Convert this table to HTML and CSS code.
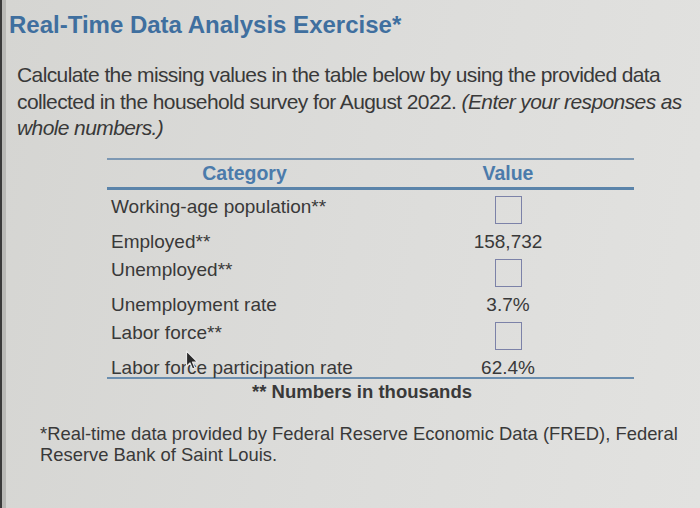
FILE: index.html
```html
<!DOCTYPE html>
<html lang="en">
<head>
<meta charset="utf-8">
<title>Real-Time Data Analysis Exercise</title>
<link rel="stylesheet" href="styles.css">
</head>
<body>
<div class="screen">
  <h1 class="title">Real-Time Data Analysis Exercise*</h1>
  <p class="prompt">Calculate the missing values in the table below by using the provided data collected in the household survey for August 2022. <em>(Enter your responses as whole numbers.)</em></p>
  <div class="table">
    <div class="head">
      <div class="cat">Category</div>
      <div class="val">Value</div>
    </div>
    <div class="row tall">
      <div class="cat">Working-age population**</div>
      <div class="val"><span class="box"></span></div>
    </div>
    <div class="row">
      <div class="cat">Employed**</div>
      <div class="val">158,732</div>
    </div>
    <div class="row tall">
      <div class="cat">Unemployed**</div>
      <div class="val"><span class="box"></span></div>
    </div>
    <div class="row">
      <div class="cat">Unemployment rate</div>
      <div class="val">3.7%</div>
    </div>
    <div class="row tall">
      <div class="cat">Labor force**</div>
      <div class="val"><span class="box"></span></div>
    </div>
    <div class="row last">
      <div class="cat">Labor force participation rate</div>
      <div class="val">62.4%</div>
    </div>
    <svg class="cursor" width="15" height="21" viewBox="0 0 15 21"><path d="M1.5 1 L1.5 16.5 L5 13 L7.5 19 L10 18 L7.5 12 L12.5 12 Z" fill="#2a2a2a" stroke="#e8e8e8" stroke-width="1.2" stroke-linejoin="round"/></svg>
  </div>
  <p class="note">** Numbers in thousands</p>
  <p class="source">*Real-time data provided by Federal Reserve Economic Data (FRED), Federal Reserve Bank of Saint Louis.</p>
</div>
</body>
</html>
```
FILE: styles.css
```css
html, body {
  margin: 0;
  padding: 0;
  width: 700px;
  height: 508px;
  overflow: hidden;
}
body {
  background: #3a3a3a;
  font-family: "Liberation Sans", Arial, sans-serif;
  color: #393939;
}
.screen {
  box-sizing: border-box;
  height: 508px;
  margin-left: 2px;
  border-left: 4px solid #b9b9b6;
  background: linear-gradient(100deg, #d5d5d2 0%, #dcdcda 50%, #e2e2e0 100%);
  padding: 11px 0 0 3px;
}
.title {
  margin: 0;
  font-size: 24px;
  font-weight: bold;
  color: #3f6f9f;
  line-height: 28px;
}
.prompt {
  margin: 23px 0 0 8px;
  font-size: 21px;
  letter-spacing: -0.6px;
  line-height: 26.5px;
  width: 674px;
}
.table {
  position: relative;
  margin: 16px 0 0 98px;
  width: 527px;
  border-top: 2px solid #7d98b3;
}
.head, .row {
  display: grid;
  grid-template-columns: 275px 1fr;
  align-items: center;
}
.head {
  height: 27px;
  border-bottom: 3px solid #5b84aa;
  font-weight: bold;
  color: #4b7bab;
  font-size: 19.5px;
}
.head .cat, .head .val { text-align: center; }
.row {
  height: 30px;
  padding-top: 8px;
  box-sizing: border-box;
  font-size: 19px;
}
.row.tall {
  height: 33px;
  padding-top: 0;
}
.row .cat { padding-left: 4px; }
.row .val { text-align: center; }
.row.last { border-bottom: 2px solid #6b8eaf; }
.box {
  display: inline-block;
  box-sizing: border-box;
  width: 27px;
  height: 28px;
  margin-top: 6px;
  border: 1.5px solid #7c82a8;
  vertical-align: middle;
}
.cursor {
  position: absolute;
  left: 78px;
  top: 190px;
}
.note {
  margin: 0;
  width: 510px;
  padding-left: 98px;
  line-height: 26px;
  text-align: center;
  font-size: 18.5px;
  font-weight: bold;
}
.source {
  margin: 18px 0 0 31px;
  width: 652px;
  font-size: 18.4px;
  line-height: 21px;
}
```
